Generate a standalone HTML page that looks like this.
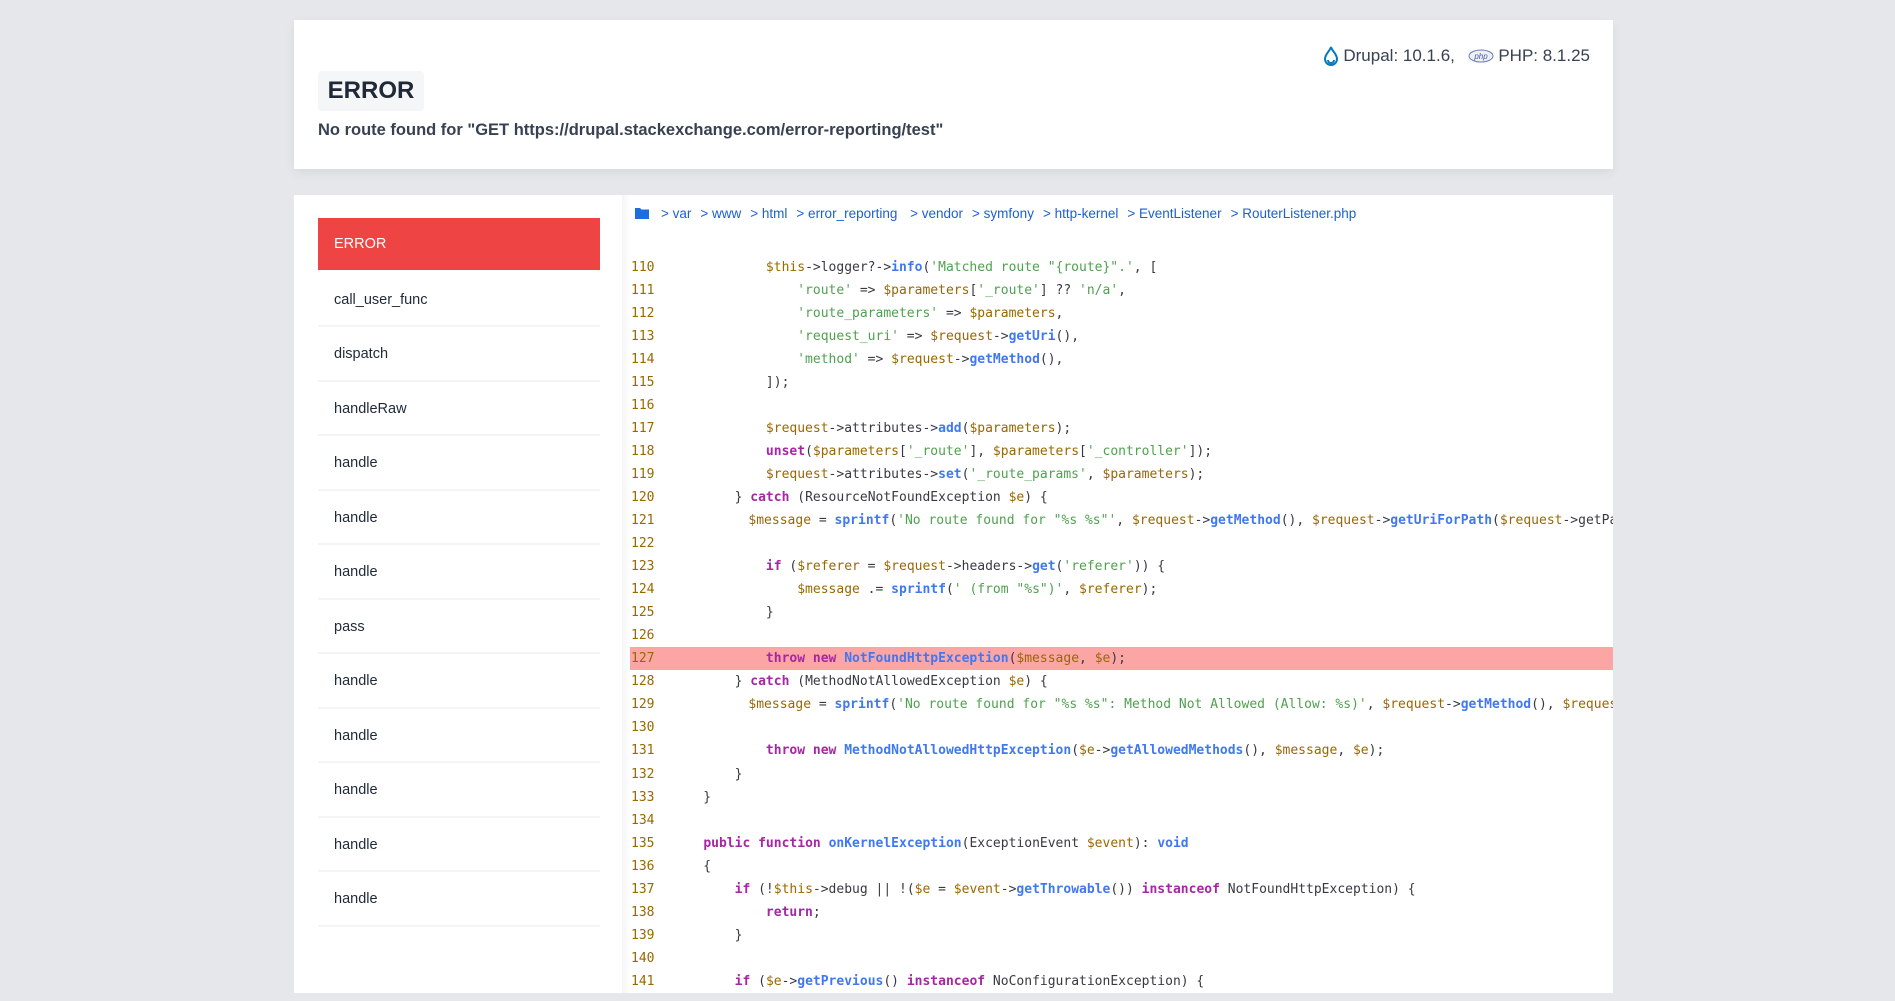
<!DOCTYPE html>
<html><head><meta charset="utf-8"><style>
*{margin:0;padding:0;box-sizing:border-box}
body{width:1895px;height:1001px;background:#e5e7eb;font-family:"Liberation Sans",sans-serif;overflow:hidden;position:relative}
.card1{position:absolute;left:294px;top:20px;width:1319px;height:149px;background:#fff;box-shadow:0 4px 10px rgba(0,0,0,.06)}
.badge{position:absolute;left:24px;top:51px;width:106px;height:40px;background:#f5f6f7;border-radius:4px;font-weight:bold;font-size:24px;color:#1f2937;line-height:40px;text-align:center}
.msg{position:absolute;left:24px;top:101px;font-size:16.5px;font-weight:bold;color:#374151}
.ver{position:absolute;right:23px;top:26px;font-size:17px;color:#374151;display:flex;align-items:center;gap:4px}
.card2{position:absolute;left:294px;top:195px;width:1319px;height:798px;background:#fff;overflow:hidden}
.side{position:absolute;left:24px;top:23px;width:282px}
.item{height:54.5px;border-bottom:2px solid #f3f4f6;font-size:14.5px;color:#1f2937;padding-left:16px;line-height:54px}
.item.act{background:#ef4444;color:#fff;height:52px;line-height:52px;border-bottom:none;margin-bottom:2.5px}
.shade{position:absolute;left:328px;top:0;width:8px;height:798px;background:linear-gradient(90deg,#f5f5f5,#fff)}
.bc{position:absolute;left:341px;top:11px;font-size:13.5px;color:#1d5fd1}
.bc span{margin-right:9px}
.code{position:absolute;left:336px;top:60.5px;width:983px;font-family:"DejaVu Sans Mono",monospace;font-size:13px;color:#383a42}
.l{height:23.06px;line-height:23.06px;white-space:pre;display:flex}
.n{width:42px;color:#986801;padding-left:1px}
.t{margin-left:0}
.hl{background:#fca5a5}
.k{color:#a626a4;font-weight:bold}.f{color:#4078f2;font-weight:bold}.v{color:#986801}.s{color:#50a14f}
</style></head><body>
<div class="card1">
<div class="ver"><svg width="16" height="20" viewBox="0 0 16 20"><path d="M8 1C9 5 14 8 14 13a6 6 0 0 1-12 0C2 8 7 5 8 1z" fill="none" stroke="#0678be" stroke-width="2"/><path d="M5 14a3 3 0 0 0 6 0" fill="none" stroke="#0678be" stroke-width="2"/></svg>Drupal: 10.1.6,&nbsp;&nbsp;<svg width="26" height="14" viewBox="0 0 26 14"><ellipse cx="13" cy="7" rx="12" ry="6" fill="#eef0f8" stroke="#6c7eb7"/><text x="13" y="10" font-size="8" font-style="italic" text-anchor="middle" fill="#4f5b93" font-family="Liberation Sans">php</text></svg>PHP: 8.1.25</div>
<div class="badge">ERROR</div>
<div class="msg">No route found for "GET https://drupal.stackexchange.com/error-reporting/test"</div>
</div>
<div class="card2">
<div class="side">
<div class="item act">ERROR</div>
<div class="item">call_user_func</div><div class="item">dispatch</div><div class="item">handleRaw</div><div class="item">handle</div><div class="item">handle</div><div class="item">handle</div><div class="item">pass</div><div class="item">handle</div><div class="item">handle</div><div class="item">handle</div><div class="item">handle</div><div class="item">handle</div>
</div>
<div class="shade"></div>
<div class="bc"><svg width="14" height="12" viewBox="0 0 14 12" style="vertical-align:-1px;margin-right:12px"><path d="M0 1h5l1.5 1.5H14V12H0z" fill="#1d6fe0"/></svg><span>&gt; var</span><span>&gt; www</span><span>&gt; html</span><span>&gt; error_reporting</span>&nbsp;<span>&gt; vendor</span><span>&gt; symfony</span><span>&gt; http-kernel</span><span>&gt; EventListener</span><span>&gt; RouterListener.php</span></div>
<div class="code">
<div class="l"><span class="n">110</span><span class="t">            <span class="v">$this</span>-&gt;logger?-&gt;<span class="f">info</span>(<span class="s">'Matched route "{route}".'</span>, [</span></div>
<div class="l"><span class="n">111</span><span class="t">                <span class="s">'route'</span> =&gt; <span class="v">$parameters</span>[<span class="s">'_route'</span>] ?? <span class="s">'n/a'</span>,</span></div>
<div class="l"><span class="n">112</span><span class="t">                <span class="s">'route_parameters'</span> =&gt; <span class="v">$parameters</span>,</span></div>
<div class="l"><span class="n">113</span><span class="t">                <span class="s">'request_uri'</span> =&gt; <span class="v">$request</span>-&gt;<span class="f">getUri</span>(),</span></div>
<div class="l"><span class="n">114</span><span class="t">                <span class="s">'method'</span> =&gt; <span class="v">$request</span>-&gt;<span class="f">getMethod</span>(),</span></div>
<div class="l"><span class="n">115</span><span class="t">            ]);</span></div>
<div class="l"><span class="n">116</span><span class="t"></span></div>
<div class="l"><span class="n">117</span><span class="t">            <span class="v">$request</span>-&gt;attributes-&gt;<span class="f">add</span>(<span class="v">$parameters</span>);</span></div>
<div class="l"><span class="n">118</span><span class="t">            <span class="k">unset</span>(<span class="v">$parameters</span>[<span class="s">'_route'</span>], <span class="v">$parameters</span>[<span class="s">'_controller'</span>]);</span></div>
<div class="l"><span class="n">119</span><span class="t">            <span class="v">$request</span>-&gt;attributes-&gt;<span class="f">set</span>(<span class="s">'_route_params'</span>, <span class="v">$parameters</span>);</span></div>
<div class="l"><span class="n">120</span><span class="t">        } <span class="k">catch</span> (ResourceNotFoundException <span class="v">$e</span>) {</span></div>
<div class="l"><span class="n">121</span><span class="t">            <span class="v">$message</span> = <span class="f">sprintf</span>(<span class="s">'No route found for "%s %s"'</span>, <span class="v">$request</span>-&gt;<span class="f">getMethod</span>(), <span class="v">$request</span>-&gt;<span class="f">getUriForPath</span>(<span class="v">$request</span>-&gt;getPathInfo()));</span></div>
<div class="l"><span class="n">122</span><span class="t"></span></div>
<div class="l"><span class="n">123</span><span class="t">            <span class="k">if</span> (<span class="v">$referer</span> = <span class="v">$request</span>-&gt;headers-&gt;<span class="f">get</span>(<span class="s">'referer'</span>)) {</span></div>
<div class="l"><span class="n">124</span><span class="t">                <span class="v">$message</span> .= <span class="f">sprintf</span>(<span class="s">' (from "%s")'</span>, <span class="v">$referer</span>);</span></div>
<div class="l"><span class="n">125</span><span class="t">            }</span></div>
<div class="l"><span class="n">126</span><span class="t"></span></div>
<div class="l hl"><span class="n">127</span><span class="t">            <span class="k">throw</span> <span class="k">new</span> <span class="f">NotFoundHttpException</span>(<span class="v">$message</span>, <span class="v">$e</span>);</span></div>
<div class="l"><span class="n">128</span><span class="t">        } <span class="k">catch</span> (MethodNotAllowedException <span class="v">$e</span>) {</span></div>
<div class="l"><span class="n">129</span><span class="t">            <span class="v">$message</span> = <span class="f">sprintf</span>(<span class="s">'No route found for "%s %s": Method Not Allowed (Allow: %s)'</span>, <span class="v">$request</span>-&gt;<span class="f">getMethod</span>(), <span class="v">$request</span>-&gt;getUriForPath());</span></div>
<div class="l"><span class="n">130</span><span class="t"></span></div>
<div class="l"><span class="n">131</span><span class="t">            <span class="k">throw</span> <span class="k">new</span> <span class="f">MethodNotAllowedHttpException</span>(<span class="v">$e</span>-&gt;<span class="f">getAllowedMethods</span>(), <span class="v">$message</span>, <span class="v">$e</span>);</span></div>
<div class="l"><span class="n">132</span><span class="t">        }</span></div>
<div class="l"><span class="n">133</span><span class="t">    }</span></div>
<div class="l"><span class="n">134</span><span class="t"></span></div>
<div class="l"><span class="n">135</span><span class="t">    <span class="k">public</span> <span class="k">function</span> <span class="f">onKernelException</span>(ExceptionEvent <span class="v">$event</span>): <span class="f">void</span></span></div>
<div class="l"><span class="n">136</span><span class="t">    {</span></div>
<div class="l"><span class="n">137</span><span class="t">        <span class="k">if</span> (!<span class="v">$this</span>-&gt;debug || !(<span class="v">$e</span> = <span class="v">$event</span>-&gt;<span class="f">getThrowable</span>()) <span class="k">instanceof</span> NotFoundHttpException) {</span></div>
<div class="l"><span class="n">138</span><span class="t">            <span class="k">return</span>;</span></div>
<div class="l"><span class="n">139</span><span class="t">        }</span></div>
<div class="l"><span class="n">140</span><span class="t"></span></div>
<div class="l"><span class="n">141</span><span class="t">        <span class="k">if</span> (<span class="v">$e</span>-&gt;<span class="f">getPrevious</span>() <span class="k">instanceof</span> NoConfigurationException) {</span></div>
</div>
</div>
</body></html>
